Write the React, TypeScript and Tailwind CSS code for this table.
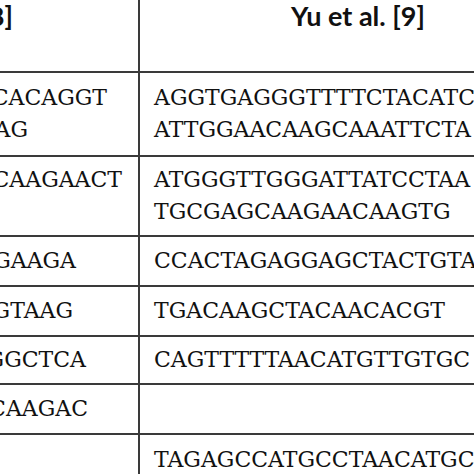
const serif = "font-['DejaVu_Serif','Liberation_Serif',serif]";

type Row = {
  h: string;
  left: { text: string; pr: string }[];
  leftAlign: string;
  right: string[];
};

const rows: Row[] = [
  {
    h: "h-[84px]",
    leftAlign: "justify-center",
    left: [
      { text: "CACAGGT", pr: "pr-[31px]" },
      { text: "AG", pr: "pr-[110px]" },
    ],
    right: ["AGGTGAGGGTTTTCTACATC", "ATTGGAACAAGCAAATTCTA"],
  },
  {
    h: "h-[80px]",
    leftAlign: "justify-start pt-[7px]",
    left: [{ text: "CAAGAACT", pr: "pr-[16px]" }],
    right: ["ATGGGTTGGGATTATCCTAA", "TGCGAGCAAGAACAAGTG"],
  },
  {
    h: "h-[50px]",
    leftAlign: "justify-center",
    left: [{ text: "GAAGA", pr: "pr-[62px]" }],
    right: ["CCACTAGAGGAGCTACTGTA"],
  },
  {
    h: "h-[50px]",
    leftAlign: "justify-center",
    left: [{ text: "GTAAG", pr: "pr-[65px]" }],
    right: ["TGACAAGCTACAACACGT"],
  },
  {
    h: "h-[48px]",
    leftAlign: "justify-center",
    left: [{ text: "GGCTCA", pr: "pr-[52px]" }],
    right: ["CAGTTTTTAACATGTTGTGC"],
  },
  {
    h: "h-[50px]",
    leftAlign: "justify-center",
    left: [{ text: "CAAGAC", pr: "pr-[50px]" }],
    right: [],
  },
];

export default function App() {
  return (
    <div className="h-[474px] w-[474px] overflow-hidden bg-white text-[#111]">
      <div className="flex w-[576px] flex-col">
        {/* Header */}
        <div className="flex h-[73px] border-b-2 border-[#3a3a3a]">
          <div className="flex w-[140px] shrink-0 items-start justify-end overflow-hidden border-r-2 border-[#3a3a3a] pt-[1px] pr-[125px]">
            <span className="shrink-0 whitespace-nowrap font-['Lato',sans-serif] text-[27px] font-bold leading-[30px]">
              [8]
            </span>
          </div>
          <div className="flex-1 pt-[1px] text-center font-['Lato',sans-serif] text-[27px] font-bold leading-[30px]">
            Yu et al. [9]
          </div>
        </div>

        {/* Body rows */}
        {rows.map((row, i) => (
          <div
            key={i}
            className={`flex ${row.h} border-b-2 border-[#3a3a3a] ${serif} text-[22px] leading-[32px]`}
          >
            <div
              className={`flex w-[140px] shrink-0 flex-col overflow-hidden border-r-2 border-[#3a3a3a] ${row.leftAlign}`}
            >
              {row.left.map((l, j) => (
                <div key={j} className={`flex justify-end ${l.pr}`}>
                  <span className="shrink-0 whitespace-nowrap">{l.text}</span>
                </div>
              ))}
            </div>
            <div className="flex flex-1 flex-col justify-center overflow-hidden pl-[14px]">
              {row.right.map((r, j) => (
                <div key={j} className="whitespace-nowrap">
                  {r}
                </div>
              ))}
            </div>
          </div>
        ))}

        {/* Last row */}
        <div className={`flex h-[82px] ${serif} text-[22px] leading-[32px]`}>
          <div className="w-[140px] shrink-0 border-r-2 border-[#3a3a3a]" />
          <div className="flex flex-1 flex-col overflow-hidden pt-[9px] pl-[14px]">
            <div className="whitespace-nowrap">TAGAGCCATGCCTAACATGC</div>
          </div>
        </div>
      </div>
    </div>
  );
}
